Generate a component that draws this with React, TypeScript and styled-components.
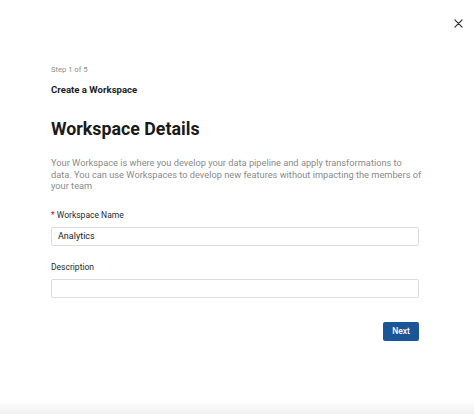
import React from "react";
import styled, { createGlobalStyle } from "styled-components";

const GlobalStyle = createGlobalStyle`
  html, body {
    margin: 0;
    padding: 0;
    background: #ffffff;
    font-family: "Roboto", "Liberation Sans", sans-serif;
  }
`;

function CloseIcon() {
  return (
    <svg width="9" height="9" viewBox="0 0 10 10">
      <path d="M1 1 L9 9 M9 1 L1 9" stroke="#333" strokeWidth="1.4" strokeLinecap="round" />
    </svg>
  );
}

export default function App() {
  return (
    <Page>
      <GlobalStyle />
      <Modal>
        <CloseButton aria-label="Close">
          <CloseIcon />
        </CloseButton>
        <Body>
          <Step>Step 1 of 5</Step>
          <Subtitle>Create a Workspace</Subtitle>
          <Title>Workspace Details</Title>
          <Intro>
            Your Workspace is where you develop your data pipeline and apply transformations to
            data. You can use Workspaces to develop new features without impacting the members
            of your team
          </Intro>
          <Field>
            <Label>
              <Required>*</Required> Workspace Name
            </Label>
            <Input defaultValue="Analytics" />
          </Field>
          <Field>
            <Label>Description</Label>
            <Input defaultValue="" />
          </Field>
          <Actions>
            <NextButton>Next</NextButton>
          </Actions>
        </Body>
      </Modal>
      <Shadow />
    </Page>
  );
}

const Page = styled.div`
  width: 474px;
  height: 414px;
  display: flex;
  flex-direction: column;
  background: #ffffff;
  overflow: hidden;
`;

const Modal = styled.div`
  position: relative;
  flex: 1;
  background: #ffffff;
`;

const CloseButton = styled.button`
  position: absolute;
  top: 16px;
  right: 9px;
  width: 14px;
  height: 14px;
  padding: 0;
  border: none;
  background: transparent;
  display: flex;
  align-items: center;
  justify-content: center;
`;

const Body = styled.div`
  display: flex;
  flex-direction: column;
  padding: 65px 55px 0 51px;
`;

const Step = styled.div`
  font-size: 7.6px;
  line-height: 10px;
  color: #8c8c8c;
`;

const Subtitle = styled.div`
  margin-top: 9px;
  font-size: 9.6px;
  line-height: 12px;
  font-weight: 700;
  color: #1f1f1f;
`;

const Title = styled.h1`
  margin: 22px 0 0;
  font-size: 17.8px;
  line-height: 22px;
  font-weight: 700;
  color: #1a1a1a;
`;

const Intro = styled.p`
  margin: 17px -4px 0 0;
  font-size: 9.25px;
  line-height: 11.6px;
  color: #8a8a8a;
`;

const Field = styled.div`
  display: flex;
  flex-direction: column;
  margin-top: 18px;

  & + & {
    margin-top: 16px;
  }
`;

const Label = styled.label`
  font-size: 8.5px;
  line-height: 10px;
  color: #2a2a2a;
`;

const Required = styled.span`
  color: #d0021b;
`;

const Input = styled.input`
  margin-top: 7px;
  height: 19px;
  box-sizing: border-box;
  border: 1px solid #dcdcdc;
  border-radius: 2px;
  padding: 0 6px;
  font-family: "Roboto", "Liberation Sans", sans-serif;
  font-size: 9px;
  color: #222;
  background: #fff;
  outline: none;
`;

const Actions = styled.div`
  display: flex;
  justify-content: flex-end;
  margin-top: 24px;
`;

const NextButton = styled.button`
  width: 36px;
  height: 19px;
  border: none;
  border-radius: 2px;
  background: #1c5597;
  color: #ffffff;
  font-family: "Roboto", "Liberation Sans", sans-serif;
  font-size: 8.5px;
  font-weight: 500;
  padding: 0;
`;

const Shadow = styled.div`
  height: 14px;
  background: linear-gradient(to bottom, #ffffff, #f0f0f0);
`;
